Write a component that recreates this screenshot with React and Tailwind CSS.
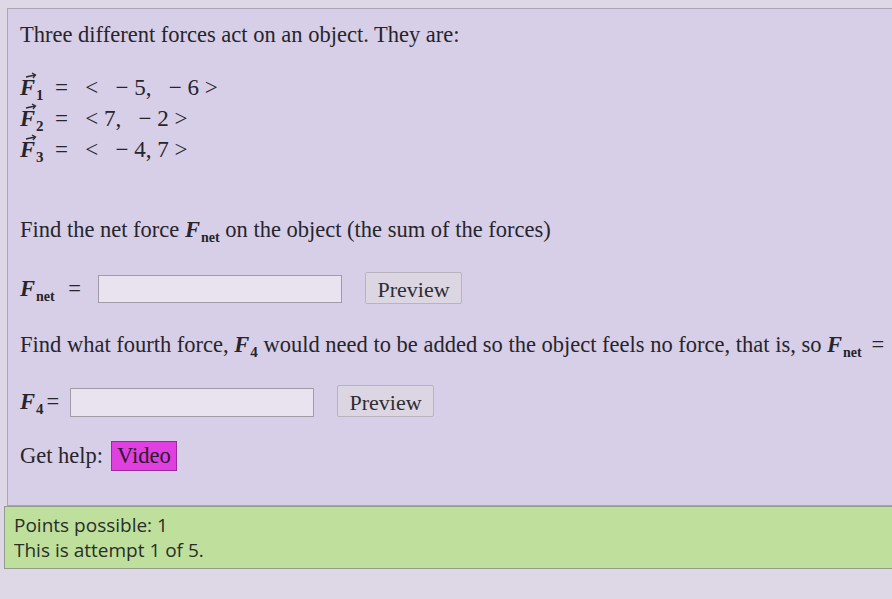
import React from 'react';

const serif = { fontFamily: '"Liberation Serif", "Times New Roman", serif' };

const Arrow = () => (
  <svg className="absolute left-[5px] top-[0px]" width="12" height="8" viewBox="0 0 12 8">
    <path d="M1 5 L10 3" stroke="#2a2930" strokeWidth="1.3" fill="none" />
    <path d="M7 1 L10.5 3 L8 6" stroke="#2a2930" strokeWidth="1.3" fill="none" />
  </svg>
);

const Sub = ({ children, size = 'text-[15px]' }) => (
  <span className={`relative top-[5px] ml-[1px] ${size} font-bold`}>{children}</span>
);

const VecF = ({ sub }) => (
  <span className="relative inline-block text-[22.5px]">
    <Arrow />
    <span className="font-bold italic">F</span>
    <Sub>{sub}</Sub>
  </span>
);

const FNet = () => (
  <span className="inline-block">
    <span className="font-bold italic">F</span>
    <Sub size="text-[14px]">net</Sub>
  </span>
);

const PreviewButton = () => (
  <button className="h-[32px] w-[97px] rounded-[2px] border border-[#b9b3bf] bg-[#dcd6e2] text-[22px] text-[#2d2d33]">
    Preview
  </button>
);

const App = () => {
  return (
    <div className="h-[599px] w-[892px] overflow-hidden bg-[#ddd7e6] pt-[8px]" style={serif}>
      <div className="ml-[7px] border border-r-0 border-[#aaa4b4] bg-[#d7cee8] pb-[34px] pl-[12px] pt-[11px] text-[22.5px] text-[#26252b]">
        <div className="h-[30px] leading-[30px]">Three different forces act on an object. They are:</div>

        <div className="mt-[22px] flex flex-col whitespace-pre text-[23px]">
          <div className="h-[31px] leading-[31px]">
            <VecF sub="1" />
            <span>{'  =   <   − 5,   − 6 >'}</span>
          </div>
          <div className="h-[31px] leading-[31px]">
            <VecF sub="2" />
            <span>{'  =   < 7,   − 2 >'}</span>
          </div>
          <div className="h-[31px] leading-[31px]">
            <VecF sub="3" />
            <span>{'  =   <   − 4, 7 >'}</span>
          </div>
        </div>

        <div className="mt-[50px] h-[30px] leading-[30px]">
          Find the net force <FNet /> on the object (the sum of the forces)
        </div>

        <div className="mt-[28px] flex h-[32px] items-center">
          <span className="w-[78px]">
            <FNet /> <span className="ml-[8px]">=</span>
          </span>
          <div className="h-[28px] w-[244px] border border-[#a19ca8] bg-[#e8e3ee]" />
          <div className="ml-[23px]">
            <PreviewButton />
          </div>
        </div>

        <div className="mt-[25px] h-[30px] whitespace-nowrap leading-[30px]">
          Find what fourth force, <span className="font-bold italic">F</span>
          <Sub>4</Sub> would need to be added so the object feels no force, that is, so <FNet /> <span className="ml-[4px]">=</span>
        </div>

        <div className="mt-[26px] flex h-[32px] items-center">
          <span className="w-[50px]">
            <span className="font-bold italic">F</span>
            <Sub>4</Sub>
            <span className="ml-[3px]">=</span>
          </span>
          <div className="h-[29px] w-[244px] border border-[#a19ca8] bg-[#e8e3ee]" />
          <div className="ml-[23px]">
            <PreviewButton />
          </div>
        </div>

        <div className="mt-[23px] flex h-[30px] items-center">
          <span>Get help:</span>
          <span className="ml-[8px] flex h-[30px] items-center border border-[#9b2aa0] bg-[#e040df] px-[5px] text-[#2a1a2e]">
            Video
          </span>
        </div>
      </div>

      <div
        className="ml-[4px] flex h-[63px] flex-col justify-center border border-r-0 border-[#939b8c] bg-[#bfe09c] pl-[9px] text-[19px] leading-[25px] text-[#2a2d2a]"
        style={{ fontFamily: '"Open Sans", "Liberation Sans", sans-serif' }}
      >
        <div>Points possible: 1</div>
        <div>This is attempt 1 of 5.</div>
      </div>
    </div>
  );
};

export default App;
